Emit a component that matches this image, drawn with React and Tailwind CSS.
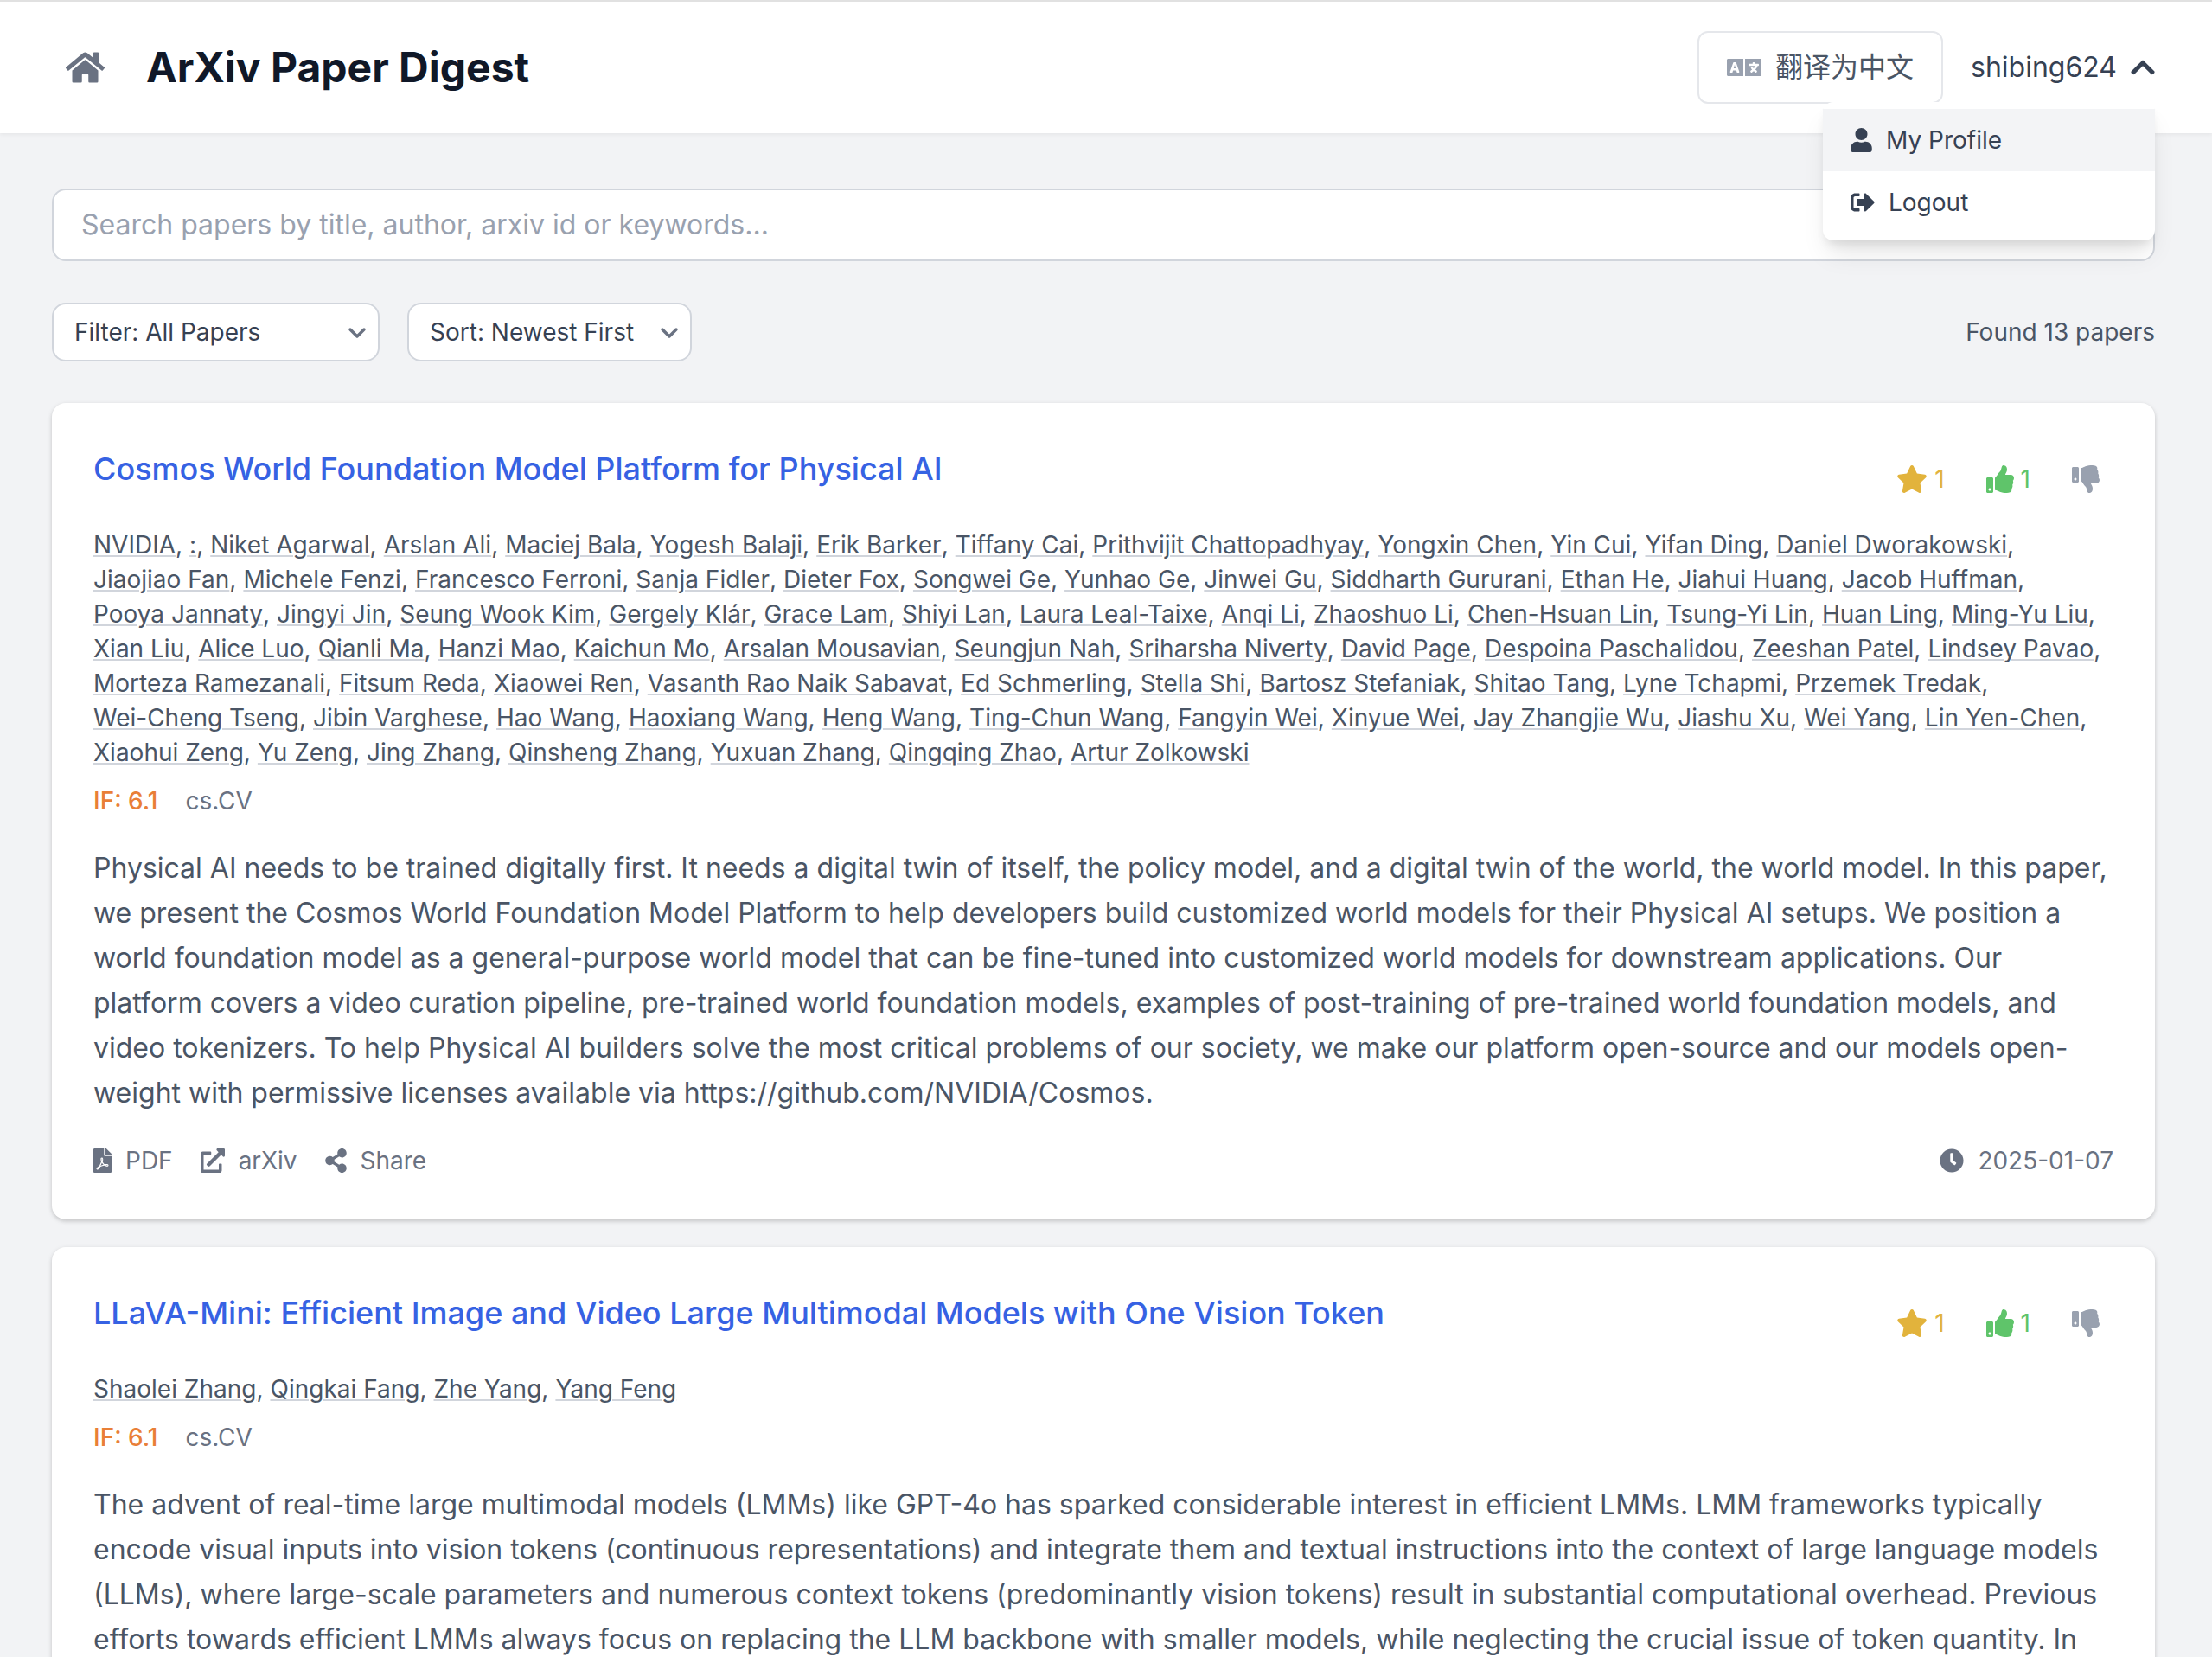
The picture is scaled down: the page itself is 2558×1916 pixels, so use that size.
import { useState } from "react";
import {
  FaChevronUp,
  FaClock,
  FaExternalLinkAlt,
  FaFilePdf,
  FaHome,
  FaLanguage,
  FaShareAlt,
  FaSignOutAlt,
  FaStar,
  FaThumbsDown,
  FaThumbsUp,
  FaUser,
} from "react-icons/fa";

const papers = [
  {
    id: "2501.03575",
    title: "Cosmos World Foundation Model Platform for Physical AI",
    authors: [
      "NVIDIA", ":", "Niket Agarwal", "Arslan Ali", "Maciej Bala", "Yogesh Balaji", "Erik Barker",
      "Tiffany Cai", "Prithvijit Chattopadhyay", "Yongxin Chen", "Yin Cui", "Yifan Ding",
      "Daniel Dworakowski", "Jiaojiao Fan", "Michele Fenzi", "Francesco Ferroni", "Sanja Fidler",
      "Dieter Fox", "Songwei Ge", "Yunhao Ge", "Jinwei Gu", "Siddharth Gururani", "Ethan He",
      "Jiahui Huang", "Jacob Huffman", "Pooya Jannaty", "Jingyi Jin", "Seung Wook Kim",
      "Gergely Klár", "Grace Lam", "Shiyi Lan", "Laura Leal-Taixe", "Anqi Li", "Zhaoshuo Li",
      "Chen-Hsuan Lin", "Tsung-Yi Lin", "Huan Ling", "Ming-Yu Liu", "Xian Liu", "Alice Luo",
      "Qianli Ma", "Hanzi Mao", "Kaichun Mo", "Arsalan Mousavian", "Seungjun Nah",
      "Sriharsha Niverty", "David Page", "Despoina Paschalidou", "Zeeshan Patel", "Lindsey Pavao",
      "Morteza Ramezanali", "Fitsum Reda", "Xiaowei Ren", "Vasanth Rao Naik Sabavat",
      "Ed Schmerling", "Stella Shi", "Bartosz Stefaniak", "Shitao Tang", "Lyne Tchapmi",
      "Przemek Tredak", "Wei-Cheng Tseng", "Jibin Varghese", "Hao Wang", "Haoxiang Wang",
      "Heng Wang", "Ting-Chun Wang", "Fangyin Wei", "Xinyue Wei", "Jay Zhangjie Wu", "Jiashu Xu",
      "Wei Yang", "Lin Yen-Chen", "Xiaohui Zeng", "Yu Zeng", "Jing Zhang", "Qinsheng Zhang",
      "Yuxuan Zhang", "Qingqing Zhao", "Artur Zolkowski",
    ],
    impact: "6.1",
    category: "cs.CV",
    abstract:
      "Physical AI needs to be trained digitally first. It needs a digital twin of itself, the policy model, and a digital twin of the world, the world model. In this paper, we present the Cosmos World Foundation Model Platform to help developers build customized world models for their Physical AI setups. We position a world foundation model as a general-purpose world model that can be fine-tuned into customized world models for downstream applications. Our platform covers a video curation pipeline, pre-trained world foundation models, examples of post-training of pre-trained world foundation models, and video tokenizers. To help Physical AI builders solve the most critical problems of our society, we make our platform open-source and our models open-weight with permissive licenses available via https://github.com/NVIDIA/Cosmos.",
    date: "2025-01-07",
    stars: 1,
    likes: 1,
  },
  {
    id: "2501.03895",
    title: "LLaVA-Mini: Efficient Image and Video Large Multimodal Models with One Vision Token",
    authors: ["Shaolei Zhang", "Qingkai Fang", "Zhe Yang", "Yang Feng"],
    impact: "6.1",
    category: "cs.CV",
    abstract:
      "The advent of real-time large multimodal models (LMMs) like GPT-4o has sparked considerable interest in efficient LMMs. LMM frameworks typically encode visual inputs into vision tokens (continuous representations) and integrate them and textual instructions into the context of large language models (LLMs), where large-scale parameters and numerous context tokens (predominantly vision tokens) result in substantial computational overhead. Previous efforts towards efficient LMMs always focus on replacing the LLM backbone with smaller models, while neglecting the crucial issue of token quantity. In",
    date: "2025-01-07",
    stars: 1,
    likes: 1,
  },
];

function Select({ label, value, onChange, options, width }) {
  return (
    <div className={`relative ${width}`}>
      <select
        aria-label={label}
        value={value}
        onChange={(e) => onChange(e.target.value)}
        className="h-[68px] w-full appearance-none rounded-2xl border-2 border-gray-300 bg-white pl-6 pr-16 text-[28px] leading-10 text-gray-700"
      >
        {options.map((option) => (
          <option key={option}>{option}</option>
        ))}
      </select>
      <svg
        viewBox="0 0 20 20"
        fill="none"
        className="pointer-events-none absolute right-1.5 top-1/2 size-10 -translate-y-1/2 text-gray-500"
      >
        <path
          stroke="currentColor"
          strokeLinecap="round"
          strokeLinejoin="round"
          strokeWidth="1.75"
          d="M6 8.5l4 4 4-4"
        />
      </svg>
    </div>
  );
}

function PaperCard({ paper }) {
  return (
    <article className="rounded-2xl bg-white p-12 shadow-[0_2px_6px_rgba(0,0,0,0.1),0_2px_4px_rgba(0,0,0,0.1)]">
      <div className="mb-7 flex items-start justify-between">
        <h2 className="text-[36px] font-medium leading-14">
          <a href={`#${paper.id}`} className="text-[#3662e3]">
            {paper.title}
          </a>
        </h2>
        <div className="flex items-center gap-4 pt-3 text-[28px] leading-10">
          <button aria-label="Star" className="flex items-center gap-2 px-4 py-2 text-[#e2b33c]">
            <FaStar className="h-8 w-9" />
            <span>{paper.stars}</span>
          </button>
          <button aria-label="Like" className="flex items-center gap-2 px-4 py-2 text-[#5fc46a]">
            <FaThumbsUp className="size-8" />
            <span>{paper.likes}</span>
          </button>
          <button aria-label="Dislike" className="flex items-center px-4 py-2 text-gray-400">
            <FaThumbsDown className="size-8" />
          </button>
        </div>
      </div>

      <ul className="mb-4 flex flex-wrap gap-x-2 text-[28px] leading-10 text-gray-600">
        {paper.authors.map((author, i) => (
          <li key={author} className="flex whitespace-nowrap">
            <a
              href={`#author-${author}`}
              className="underline decoration-gray-300 decoration-2 underline-offset-2"
            >
              {author}
            </a>
            {i < paper.authors.length - 1 && <span>,</span>}
          </li>
        ))}
      </ul>

      <div className="mb-8 flex gap-8 text-[28px] leading-10">
        <span className="font-medium text-[#e97f37]">IF: {paper.impact}</span>
        <span className="text-gray-500">{paper.category}</span>
      </div>

      <p className="mb-8 text-[32px] leading-[52px] text-gray-600">{paper.abstract}</p>

      <div className="flex items-center justify-between text-[28px] leading-10 text-gray-500">
        <div className="flex items-center gap-8">
          <a href={`#pdf-${paper.id}`} className="flex items-center gap-4">
            <FaFilePdf className="h-7 w-[21px]" />
            PDF
          </a>
          <a href={`#arxiv-${paper.id}`} className="flex items-center gap-4">
            <FaExternalLinkAlt className="size-7" />
            arXiv
          </a>
          <button className="flex items-center gap-4">
            <FaShareAlt className="h-7 w-[25px]" />
            Share
          </button>
        </div>
        <div className="flex items-center gap-4">
          <FaClock className="size-7" />
          <time dateTime={paper.date}>{paper.date}</time>
        </div>
      </div>
    </article>
  );
}

export default function App() {
  const [menuOpen, setMenuOpen] = useState(true);
  const [query, setQuery] = useState("");
  const [filter, setFilter] = useState("Filter: All Papers");
  const [sort, setSort] = useState("Sort: Newest First");

  return (
    <div className="min-h-screen bg-[#f2f3f5] font-['Inter','Noto_Sans_CJK_SC',sans-serif]">
      <header className="border-t-2 border-[#e1e1e1] bg-white shadow-[0_2px_4px_rgba(0,0,0,0.05)]">
        <div className="flex items-center justify-between py-[34px] pl-[60px] pr-[66px]">
          <div className="flex items-center gap-8">
            <a href="#home" aria-label="Home" className="px-4 text-gray-500">
              <FaHome className="h-10 w-[45px]" />
            </a>
            <h1 className="text-5xl font-bold text-gray-900">ArXiv Paper Digest</h1>
          </div>
          <div className="flex items-center gap-8 text-[32px] leading-12">
            <button className="flex items-center gap-4 rounded-xl border-2 border-gray-200 px-8 py-4 text-gray-600">
              <FaLanguage className="h-8 w-10 text-gray-400" />
              翻译为中文
            </button>
            <div className="relative">
              <button
                onClick={() => setMenuOpen(!menuOpen)}
                className="flex items-center gap-4 text-gray-700"
              >
                shibing624
                <FaChevronUp className="h-8 w-7" />
              </button>
              {menuOpen && (
                <div className="absolute right-0 top-full z-10 mt-4 w-96 rounded-xl bg-white py-2 text-[28px] leading-10 text-gray-700 shadow-[0_20px_30px_-6px_rgba(0,0,0,0.1),0_8px_12px_-4px_rgba(0,0,0,0.1)]">
                  <a href="#profile" className="flex items-center gap-4 bg-gray-100 px-8 py-4">
                    <FaUser className="h-7 w-[25px]" />
                    My Profile
                  </a>
                  <button className="flex w-full items-center gap-4 px-8 py-4">
                    <FaSignOutAlt className="size-7" />
                    Logout
                  </button>
                </div>
              )}
            </div>
          </div>
        </div>
      </header>

      <main className="pb-16 pl-[60px] pr-[66px] pt-16">
        <input
          type="search"
          aria-label="Search papers"
          value={query}
          onChange={(e) => setQuery(e.target.value)}
          placeholder="Search papers by title, author, arxiv id or keywords..."
          className="mb-12 block w-full rounded-2xl border-2 border-gray-300 bg-white px-8 py-4 text-[32px] leading-12 placeholder:text-gray-400"
        />

        <div className="mb-12 flex items-center justify-between">
          <div className="flex gap-8">
            <Select
              label="Filter papers"
              value={filter}
              onChange={setFilter}
              options={["Filter: All Papers", "Filter: Starred", "Filter: Liked"]}
              width="w-[379px]"
            />
            <Select
              label="Sort papers"
              value={sort}
              onChange={setSort}
              options={["Sort: Newest First", "Sort: Oldest First"]}
              width="w-[329px]"
            />
          </div>
          <span className="text-[28px] leading-10 text-gray-600">Found 13 papers</span>
        </div>

        <div className="flex flex-col gap-8">
          {papers.map((paper) => (
            <PaperCard key={paper.id} paper={paper} />
          ))}
        </div>
      </main>
    </div>
  );
}
